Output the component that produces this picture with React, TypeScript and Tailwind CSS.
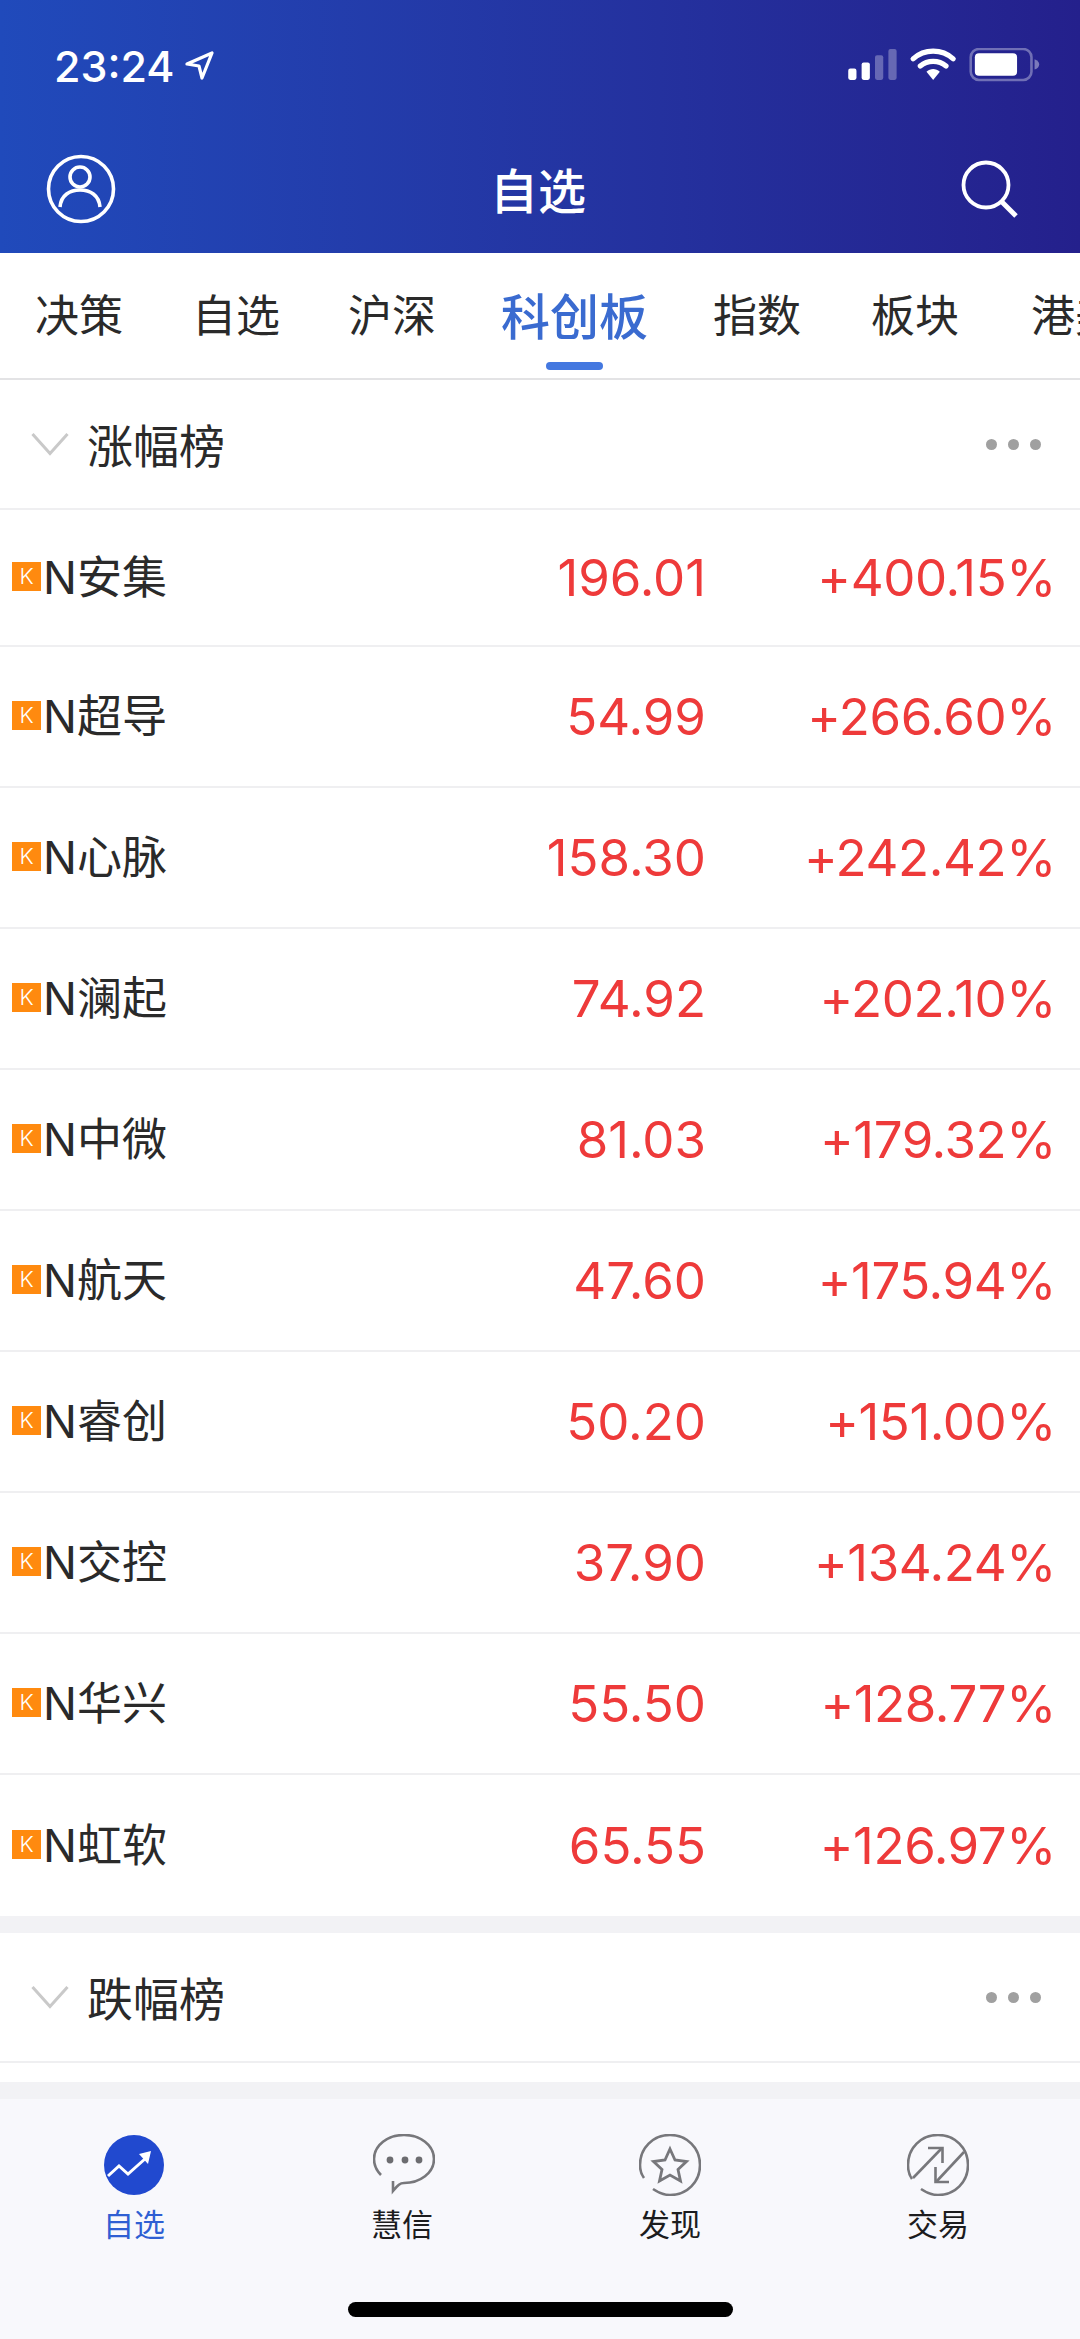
import React from "react";

const cjk = "font-['Noto_Sans_CJK_SC','Liberation_Sans',sans-serif]";
const num = "font-['Inter','Noto_Sans_CJK_SC',sans-serif]";

const tabs = [
  { label: "决策", cls: "ml-[35px]" },
  { label: "自选", cls: "ml-[69px]" },
  { label: "沪深", cls: "ml-[68px]" },
  { label: "科创板", cls: "ml-[65px]", active: true },
  { label: "指数", cls: "ml-[65px]" },
  { label: "板块", cls: "ml-[70px]" },
  { label: "港美", cls: "ml-[72px]" },
];

const rows = [
  ["N安集", "196.01", "+400.15%"],
  ["N超导", "54.99", "+266.60%"],
  ["N心脉", "158.30", "+242.42%"],
  ["N澜起", "74.92", "+202.10%"],
  ["N中微", "81.03", "+179.32%"],
  ["N航天", "47.60", "+175.94%"],
  ["N睿创", "50.20", "+151.00%"],
  ["N交控", "37.90", "+134.24%"],
  ["N华兴", "55.50", "+128.77%"],
  ["N虹软", "65.55", "+126.97%"],
];

const StatusIcons = () => (
  <svg width="194" height="35" viewBox="0 0 188 34" fill="none">
    <rect x="0" y="20" width="8" height="11" rx="2" fill="#fff" />
    <rect x="13" y="14" width="8" height="17" rx="2" fill="#fff" />
    <rect x="26" y="7" width="8" height="24" rx="2" fill="#fff" fillOpacity="0.3" />
    <rect x="39" y="1" width="8" height="30" rx="2" fill="#fff" fillOpacity="0.3" />
    <path d="M63 10.5C74 0.5 91 0.5 102 10.5" stroke="#fff" strokeWidth="5" strokeLinecap="round" />
    <path d="M70 17.5C77 11.5 88 11.5 95 17.5" stroke="#fff" strokeWidth="5" strokeLinecap="round" />
    <path d="M76 23C80 19.5 85 19.5 89 23L82.5 31Z" fill="#fff" />
    <rect x="119" y="1" width="59" height="30" rx="8" stroke="#fff" strokeOpacity="0.35" strokeWidth="2.5" />
    <rect x="123" y="5" width="41" height="22" rx="4" fill="#fff" />
    <path d="M181 11C184 12 185.5 14 185.5 16S184 20 181 21Z" fill="#fff" fillOpacity="0.4" />
  </svg>
);

const Chevron = () => (
  <svg width="38" height="24" viewBox="0 0 38 24" fill="none" className="shrink-0">
    <path d="M1.5 2L19 21.5L36.5 2" stroke="#c9c9c9" strokeWidth="3" />
  </svg>
);

const SectionHeader = ({ title }: { title: string }) => (
  <div className="flex h-[130px] shrink-0 items-center border-b-[2px] border-[#efeff1] pr-[39px] pl-[31px]">
    <Chevron />
    <span className={`mb-[2px] ml-[18px] flex-1 text-[46px] leading-none text-[#2a2a2a] ${cjk}`}>{title}</span>
    <div className="flex gap-[11px]">
      <span className="h-[11px] w-[11px] rounded-full bg-[#a0a0a0]" />
      <span className="h-[11px] w-[11px] rounded-full bg-[#a0a0a0]" />
      <span className="h-[11px] w-[11px] rounded-full bg-[#a0a0a0]" />
    </div>
  </div>
);

const Row = ({ name, price, pct }: { name: string; price: string; pct: string }) => (
  <div className="flex h-[141px] items-center border-b-[2px] border-[#efeff1] first:h-[137px] last:h-[141px] last:border-b-0">
    <span className={`mb-[3px] ml-[12px] flex h-[29px] w-[29px] shrink-0 items-center justify-center bg-[#ff8a0f] text-[22px] leading-none font-light text-white ${num}`}>
      K
    </span>
    <span className={`ml-[2px] flex-1 text-[45px] leading-none text-[#2a2a2a] ${num}`}>{name}</span>
    <span className={`text-right text-[51px] leading-none text-[#ee3a3a] ${num}`}>{price}</span>
    <span className={`w-[374px] pr-[24px] text-right text-[51px] leading-none tracking-[-0.4px] text-[#ee3a3a] ${num}`}>{pct}</span>
  </div>
);

const NavIcon = ({ kind }: { kind: string }) => {
  if (kind === "home") {
    return (
      <svg width="62" height="62" viewBox="0 0 62 62" fill="none">
        <circle cx="31" cy="31" r="30" fill="#2149cf" />
        <path d="M5 42L16 32L25 40L43 24" stroke="#fff" strokeWidth="3" />
        <path d="M36 20L48 17L45 30Z" fill="#fff" />
      </svg>
    );
  }
  if (kind === "chat") {
    return (
      <svg width="62" height="62" viewBox="0 0 62 62" fill="none" className="ml-[3px]">
        <path
          d="M8 41C3 36 1 30 1 25C1 11 15 1 31 1C47 1 61 11 61 25C61 39 47 49 31 49C27 49 25 51 20 57V47"
          stroke="#77777b"
          strokeWidth="2.6"
        />
        <circle cx="17" cy="26" r="3.4" fill="#6c6c70" />
        <circle cx="32" cy="26" r="3.4" fill="#6c6c70" />
        <circle cx="46" cy="26" r="3.4" fill="#6c6c70" />
      </svg>
    );
  }
  if (kind === "star") {
    return (
      <svg width="62" height="62" viewBox="0 0 62 62" fill="none">
        <path
          d="M5 44C2 40 1 36 1 31C1 14 14 1 31 1S61 14 61 31S48 61 31 61C25 61 20 59 14 55"
          stroke="#77777b"
          strokeWidth="2.6"
        />
        <path
          d="M31 15L36 26L47.5 27.5L39 35.5L41.5 47L31 41L20.5 47L23 35.5L14.5 27.5L26 26Z"
          stroke="#77777b"
          strokeWidth="2.8"
          strokeLinejoin="miter"
        />
      </svg>
    );
  }
  return (
    <svg width="62" height="62" viewBox="0 0 62 62" fill="none">
      <path
        d="M5 45C2 41 1 36 1 31C1 14 14 1 31 1S61 14 61 31S48 61 31 61C25 61 20 59 14 55"
        stroke="#77777b"
        strokeWidth="2.6"
      />
      <path d="M6 44L35 14" stroke="#77777b" strokeWidth="2.6" />
      <path d="M21 14H35.500V29" stroke="#77777b" strokeWidth="2.6" />
      <path d="M57 18L29 48" stroke="#77777b" strokeWidth="2.6" />
      <path d="M42 48H28.500V33" stroke="#77777b" strokeWidth="2.6" />
    </svg>
  );
};

const navItems = [
  { kind: "home", label: "自选", active: true },
  { kind: "chat", label: "慧信" },
  { kind: "star", label: "发现" },
  { kind: "trade", label: "交易" },
];

export default function App() {
  return (
    <div className="flex h-[2339px] w-[1080px] flex-col overflow-hidden bg-white">
      <header className="h-[253px] shrink-0 bg-linear-to-r from-[#204abb] to-[#24208c] text-white">
        <div className="flex h-[154px] items-start pt-[41px] pr-[38px] pl-[54px]">
          <span className={`text-[43px] leading-[50px] font-medium ${num}`}>23:24</span>
          <svg width="30" height="30" viewBox="0 0 30 30" fill="none" className="mt-[9px] ml-[10px]">
            <path d="M2 14L27 3L17 28L14 16Z" stroke="#fff" strokeWidth="3.2" strokeLinejoin="round" />
          </svg>
          <div className="mt-[7px] ml-auto">
            <StatusIcons />
          </div>
        </div>
        <div className="flex items-center justify-between pr-[60px] pl-[46px]">
          <svg width="70" height="70" viewBox="0 0 70 70" fill="none">
            <circle cx="35" cy="35" r="32.500" stroke="#fff" strokeWidth="3.600" />
            <circle cx="34" cy="23" r="10" stroke="#fff" strokeWidth="3.600" />
            <path d="M14 53C15 41 24 36 34 36S53 41 54 53" stroke="#fff" strokeWidth="3.600" />
          </svg>
          <span className={`mb-[3px] text-[48px] leading-none font-medium ${cjk}`}>自选</span>
          <svg width="60" height="60" viewBox="0 0 60 60" fill="none">
            <circle cx="26" cy="26" r="22.500" stroke="#fff" strokeWidth="3.800" />
            <path d="M42 43L56 57" stroke="#fff" strokeWidth="5" />
          </svg>
        </div>
      </header>

      <nav className="relative mt-[1px] flex h-[126px] shrink-0 items-center overflow-hidden border-b-[2px] border-[#e3e3e5] pb-[6px] whitespace-nowrap">
        {tabs.map((t) =>
          t.active ? (
            <span key={t.label} className={`relative shrink-0 text-[49px] leading-none font-medium text-[#3a6bd0] ${t.cls} ${cjk}`}>
              {t.label}
              <span className="absolute top-[73px] left-[45px] h-[8px] w-[57px] rounded-full bg-[#4478e0]" />
            </span>
          ) : (
            <span key={t.label} className={`shrink-0 text-[44px] leading-none text-[#2a2a2a] ${t.cls} ${cjk}`}>
              {t.label}
            </span>
          ),
        )}
      </nav>

      <SectionHeader title="涨幅榜" />
      <div className="shrink-0">
        {rows.map((r) => (
          <Row key={r[0]} name={r[0]} price={r[1]} pct={r[2]} />
        ))}
      </div>

      <div className="h-[17px] shrink-0 bg-[#f2f2f5]" />
      <SectionHeader title="跌幅榜" />
      <div className="h-[19px] shrink-0" />
      <div className="h-[17px] shrink-0 bg-[#f2f2f5]" />

      <footer className="flex-1 bg-[#f8f8fc] pt-[35px]">
        <div className="grid w-[1072px] grid-cols-4">
          {navItems.map((n) => (
            <div key={n.label} className="flex flex-col items-center">
              <NavIcon kind={n.kind} />
              <span className={`mt-[10px] text-[31px] leading-[34px] ${n.active ? "text-[#2f5fd3]" : "text-[#1c1c1e]"} ${cjk}`}>
                {n.label}
              </span>
            </div>
          ))}
        </div>
        <div className="mt-[62px] ml-[348px] h-[15px] w-[385px] rounded-full bg-black" />
      </footer>
    </div>
  );
}
